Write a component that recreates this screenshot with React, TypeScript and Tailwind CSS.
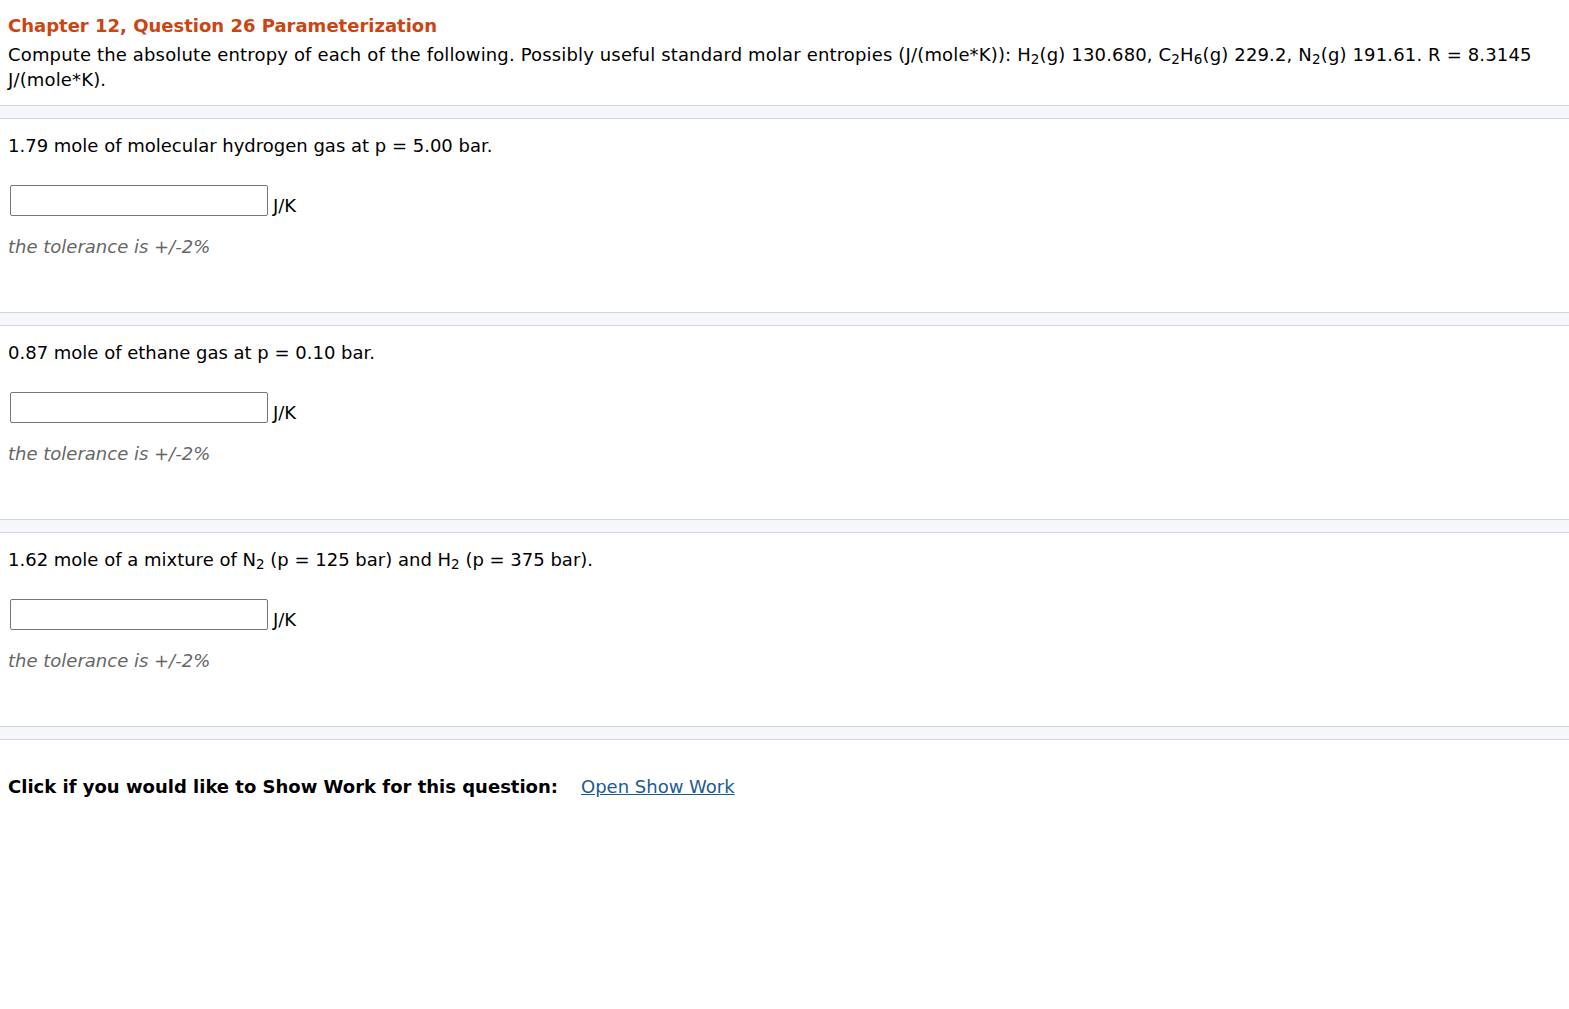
import React from 'react';

const font = { fontFamily: '"DejaVu Sans", Verdana, sans-serif' };

function Band() {
  return <div className="h-[14px] border-y border-[#cfd6df] bg-[#f5f7fa]" />;
}

function Part({ children }: { children: React.ReactNode }) {
  return (
    <div className="px-2 pt-[14px] pb-[53px]">
      <p className="leading-[25px]">{children}</p>
      <div className="mt-[27px] flex items-end ml-[2px]">
        <input
          type="text"
          className="h-[31px] w-[258px] rounded-[2px] border border-[#767676] bg-white"
        />
        <span className="ml-[5px] leading-[20px]">J/K</span>
      </div>
      <p className="mt-[18px] leading-[25px] italic text-[#666]">the tolerance is +/-2%</p>
    </div>
  );
}

export default function App() {
  return (
    <div className="min-h-screen bg-white text-[18px] text-black" style={font}>
      <div className="px-2 pt-[12px] pb-[13px]">
        <h1 className="text-[18px] leading-[25px] font-bold text-[#cc4411] translate-y-[1px]">
          Chapter 12, Question 26 Parameterization
        </h1>
        <p className="mt-[5px] leading-[25px] tracking-[0.15px]">
          Compute the absolute entropy of each of the following. Possibly useful standard molar entropies
          (J/(mole*K)): H<sub>2</sub>(g) 130.680, C<sub>2</sub>H<sub>6</sub>(g) 229.2, N<sub>2</sub>(g) 191.61. R = 8.3145
          J/(mole*K).
        </p>
      </div>
      <Band />
      <Part>1.79 mole of molecular hydrogen gas at p = 5.00 bar.</Part>
      <Band />
      <Part>0.87 mole of ethane gas at p = 0.10 bar.</Part>
      <Band />
      <Part>
        1.62 mole of a mixture of N<sub>2</sub> (p = 125 bar) and H<sub>2</sub> (p = 375 bar).
      </Part>
      <Band />
      <div className="px-2 pt-[33px] flex items-baseline">
        <span className="font-bold leading-[25px]">Click if you would like to Show Work for this question:</span>
        <a href="#" className="ml-[23px] text-[#1c5a96] underline">
          Open Show Work
        </a>
      </div>
    </div>
  );
}
